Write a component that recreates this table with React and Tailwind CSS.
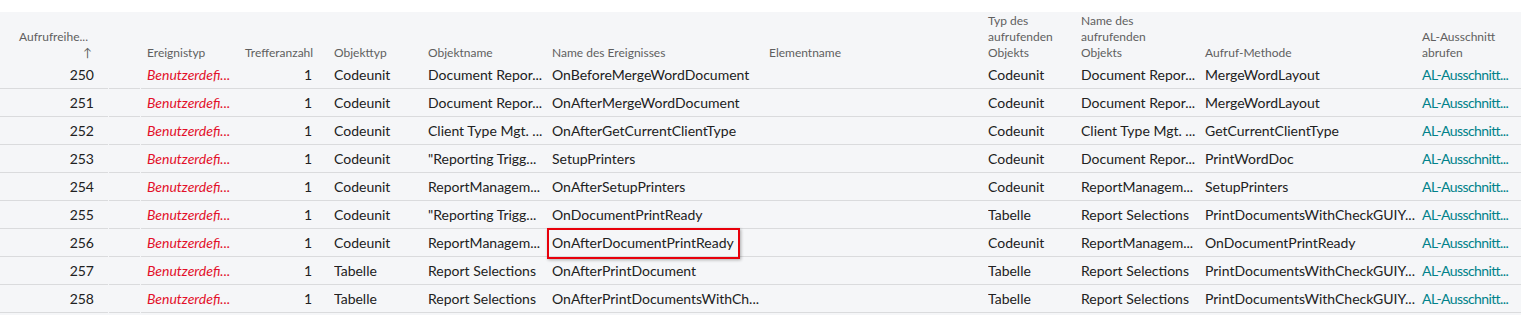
import React from "react";

const ROWS = [
    ["250", "Codeunit", "Document Repor...", "OnBeforeMergeWordDocument", "Codeunit", "Document Repor...", "MergeWordLayout"],
    ["251", "Codeunit", "Document Repor...", "OnAfterMergeWordDocument", "Codeunit", "Document Repor...", "MergeWordLayout"],
    ["252", "Codeunit", "Client Type Mgt. ...", "OnAfterGetCurrentClientType", "Codeunit", "Client Type Mgt. ...", "GetCurrentClientType"],
    ["253", "Codeunit", "\"Reporting Trigg...", "SetupPrinters", "Codeunit", "Document Repor...", "PrintWordDoc"],
    ["254", "Codeunit", "ReportManagem...", "OnAfterSetupPrinters", "Codeunit", "ReportManagem...", "SetupPrinters"],
    ["255", "Codeunit", "\"Reporting Trigg...", "OnDocumentPrintReady", "Tabelle", "Report Selections", "PrintDocumentsWithCheckGUIY..."],
    ["256", "Codeunit", "ReportManagem...", "OnAfterDocumentPrintReady", "Codeunit", "ReportManagem...", "OnDocumentPrintReady"],
    ["257", "Tabelle", "Report Selections", "OnAfterPrintDocument", "Tabelle", "Report Selections", "PrintDocumentsWithCheckGUIY..."],
    ["258", "Tabelle", "Report Selections", "OnAfterPrintDocumentsWithCh...", "Tabelle", "Report Selections", "PrintDocumentsWithCheckGUIY..."],
];

export default function App() {
    return (
        <div className="relative w-[1524px] h-[315px] bg-white pt-[12px] font-['Lato','Open_Sans',sans-serif] overflow-hidden">
            <div className="w-[1521px] h-[303px] bg-[#f5f6f8]">
                {/* Header */}
                <div className="flex items-end h-[49px] text-[12px] leading-[16px] text-[#5f5f5f]">
                    <div className="w-[108px] pr-[20px] text-right">
                        <div>Aufrufreihe...</div>
                        <div className="-mr-[4px]">↑</div>
                    </div>
                    <div className="w-[33px]" />
                    <div className="w-[104px] pl-[6px]">Ereignistyp</div>
                    <div className="w-[89px] pr-[22px] text-right">Trefferanzahl</div>
                    <div className="w-[94px]">Objekttyp</div>
                    <div className="w-[124px]">Objektname</div>
                    <div className="w-[217px]">Name des Ereignisses</div>
                    <div className="w-[219px]">Elementname</div>
                    <div className="w-[93px]">
                        Typ des<br />aufrufenden<br />Objekts
                    </div>
                    <div className="w-[124px]">
                        Name des<br />aufrufenden<br />Objekts
                    </div>
                    <div className="w-[217px]">Aufruf-Methode</div>
                    <div className="w-[99px]">
                        AL-Ausschnitt<br />abrufen
                    </div>
                </div>

                {/* Rows */}
                {ROWS.map((r) => (
                    <div key={r[0]} className="flex h-[28px] text-[14px] text-[#212121]">
                        <div className="w-[108px] pr-[14px] text-right border-b border-[#dadbdd] flex items-center justify-end">{r[0]}</div>
                        <div className="w-[31px] ml-[1px] border-b border-[#dadbdd]" />
                        <div className="flex-1 ml-[1px] flex items-center border-b border-[#dadbdd] whitespace-nowrap overflow-hidden">
                            <div className="w-[104px] pl-[6px] italic text-[#e3102a] truncate">Benutzerdefi...</div>
                            <div className="w-[89px] pr-[22px] text-right">1</div>
                            <div className="w-[94px] truncate">{r[1]}</div>
                            <div className="w-[124px] pr-[4px] truncate">{r[2]}</div>
                            <div className="w-[217px] pr-[4px] truncate">{r[3]}</div>
                            <div className="w-[219px]" />
                            <div className="w-[93px] truncate">{r[4]}</div>
                            <div className="w-[124px] pr-[4px] truncate">{r[5]}</div>
                            <div className="w-[217px] pr-[4px] truncate">{r[6]}</div>
                            <div className="shrink-0 text-[#00828a] tracking-[-0.6px]">AL-Ausschnitt...</div>
                        </div>
                    </div>
                ))}
            </div>

            {/* Annotation box */}
            <div className="absolute left-[547px] top-[228px] w-[193px] h-[31px] border-2 border-[#e8000b] shadow-[1px_1px_3px_rgba(0,0,0,0.3)]" />
        </div>
    );
}
